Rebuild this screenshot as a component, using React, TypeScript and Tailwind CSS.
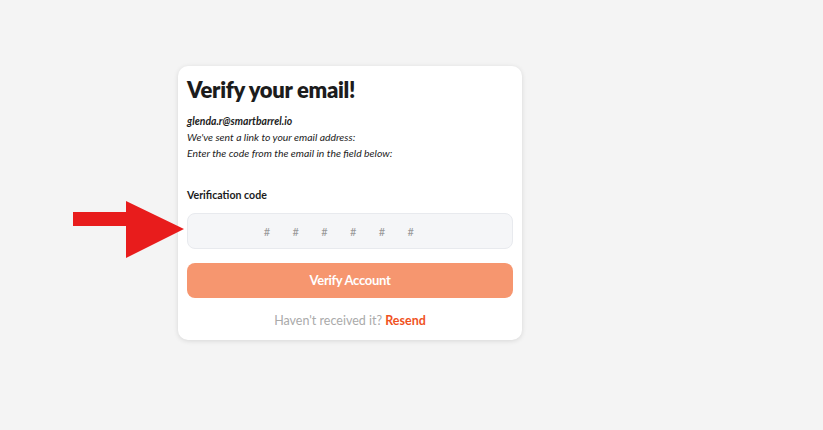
export default function App() {
  return (
    <div className="relative flex min-h-[430px] w-full bg-[#f4f4f4] pl-[178px] pt-[66px] font-['Lato',sans-serif]">
      <div className="flex w-[344px] flex-col self-start rounded-[10px] bg-white px-[9px] pb-[10px] pt-[9px] shadow-[0_1px_5px_rgba(0,0,0,0.12)]">
        <h1 className="text-[22px] font-extrabold leading-[30px] tracking-[-0.3px] text-[#1c1c1c]">Verify your email!</h1>
        <div className="mt-[8px] text-[10.4px] italic leading-[16px] text-[#1c1c1c]">
          <p className="font-bold">glenda.r@smartbarrel.io</p>
          <p>We've sent a link to your email address:</p>
          <p>Enter the code from the email in the field below:</p>
        </div>
        <label className="mt-[27px] text-[10.6px] font-bold leading-[14px] text-[#1c1c1c]">Verification code</label>
        <div className="relative mt-[11px]">
          <input
            className="h-[36px] w-full rounded-[8px] border border-[#e8eaee] bg-[#f5f6f8] text-center text-[11px] tracking-[22.4px] text-[#888] outline-none placeholder:text-[#999]"
            placeholder="######"
          />
          <svg
            className="absolute left-[-114px] top-[-12px]"
            width="112"
            height="58"
            viewBox="0 0 112 58"
          >
            <polygon points="0,11 53,11 53,0 111,28 53,57 53,25 0,25" fill="#e81c1c" />
          </svg>
        </div>
        <button className="mt-[14px] h-[35px] w-full rounded-[8px] bg-[#f6966f] text-[13px] font-bold tracking-[-0.3px] text-white">
          Verify Account
        </button>
        <p className="mt-[14px] text-center text-[12.5px] leading-[18px] text-[#aaa]">
          Haven't received it? <span className="font-bold text-[#f0521e]">Resend</span>
        </p>
      </div>
    </div>
  )
}
